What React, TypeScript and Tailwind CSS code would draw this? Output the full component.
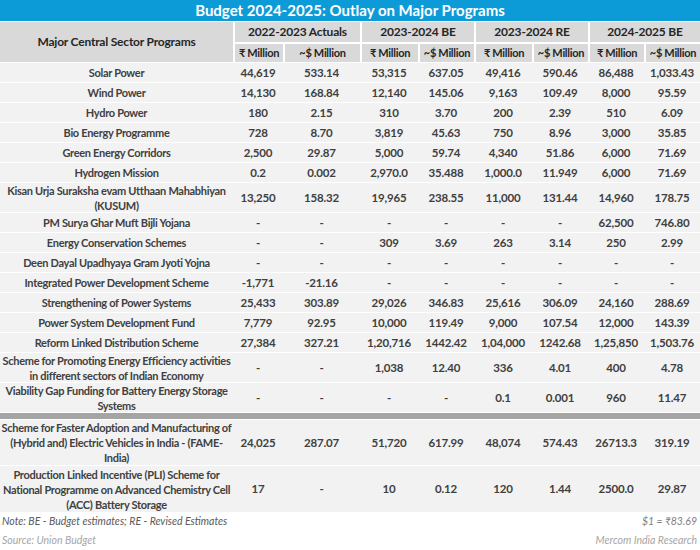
import React from "react";

type Row = { name: string[]; vals: string[]; h: string };

const rows: Row[] = [
  { name: ["Solar Power"], vals: ["44,619", "533.14", "53,315", "637.05", "49,416", "590.46", "86,488", "1,033.43"], h: "h-[20px]" },
  { name: ["Wind Power"], vals: ["14,130", "168.84", "12,140", "145.06", "9,163", "109.49", "8,000", "95.59"], h: "h-[20px]" },
  { name: ["Hydro Power"], vals: ["180", "2.15", "310", "3.70", "200", "2.39", "510", "6.09"], h: "h-[20px]" },
  { name: ["Bio Energy Programme"], vals: ["728", "8.70", "3,819", "45.63", "750", "8.96", "3,000", "35.85"], h: "h-[20px]" },
  { name: ["Green Energy Corridors"], vals: ["2,500", "29.87", "5,000", "59.74", "4,340", "51.86", "6,000", "71.69"], h: "h-[20px]" },
  { name: ["Hydrogen Mission"], vals: ["0.2", "0.002", "2,970.0", "35.488", "1,000.0", "11.949", "6,000", "71.69"], h: "h-[20px]" },
  { name: ["Kisan Urja Suraksha evam Utthaan Mahabhiyan", "(KUSUM)"], vals: ["13,250", "158.32", "19,965", "238.55", "11,000", "131.44", "14,960", "178.75"], h: "h-[30px]" },
  { name: ["PM Surya Ghar Muft Bijli Yojana"], vals: ["-", "-", "-", "-", "-", "-", "62,500", "746.80"], h: "h-[20px]" },
  { name: ["Energy Conservation Schemes"], vals: ["-", "-", "309", "3.69", "263", "3.14", "250", "2.99"], h: "h-[20px]" },
  { name: ["Deen Dayal Upadhyaya Gram Jyoti Yojna"], vals: ["-", "-", "-", "-", "-", "-", "-", "-"], h: "h-[20px]" },
  { name: ["Integrated Power Development Scheme"], vals: ["-1,771", "-21.16", "-", "-", "-", "-", "-", "-"], h: "h-[20px]" },
  { name: ["Strengthening of Power Systems"], vals: ["25,433", "303.89", "29,026", "346.83", "25,616", "306.09", "24,160", "288.69"], h: "h-[20px]" },
  { name: ["Power System Development Fund"], vals: ["7,779", "92.95", "10,000", "119.49", "9,000", "107.54", "12,000", "143.39"], h: "h-[20px]" },
  { name: ["Reform Linked Distribution Scheme"], vals: ["27,384", "327.21", "1,20,716", "1442.42", "1,04,000", "1242.68", "1,25,850", "1,503.76"], h: "h-[20px]" },
  { name: ["Scheme for Promoting Energy Efficiency activities", "in different sectors of Indian Economy"], vals: ["-", "-", "1,038", "12.40", "336", "4.01", "400", "4.78"], h: "h-[30px]" },
  { name: ["Viability Gap Funding for Battery Energy Storage", "Systems"], vals: ["-", "-", "-", "-", "0.1", "0.001", "960", "11.47"], h: "h-[30px]" },
];

const rows2: Row[] = [
  { name: ["Scheme for Faster Adoption and Manufacturing of", "(Hybrid and) Electric Vehicles in India - (FAME-", "India)"], vals: ["24,025", "287.07", "51,720", "617.99", "48,074", "574.43", "26713.3", "319.19"], h: "h-[46px]" },
  { name: ["Production Linked Incentive (PLI) Scheme for", "National Programme on Advanced Chemistry Cell", "(ACC) Battery Storage"], vals: ["17", "-", "10", "0.12", "120", "1.44", "2500.0", "29.87"], h: "h-[47px]" },
];

const grid = "grid grid-cols-[233px_50px_77px_58px_56px_58px_56px_56px_56px]";

function BodyRow({ r }: { r: Row }) {
  return (
    <div className={`${grid} ${r.h} bg-[#f2f2f2] border-b border-white items-center text-[#404040]`}>
      <div className="flex flex-col items-center justify-center text-center leading-[15px] text-[11px] tracking-[-0.3px]">
        {r.name.map((n, i) => (
          <span key={i} className="whitespace-nowrap">{n}</span>
        ))}
      </div>
      {r.vals.map((v, i) => (
        <div key={i} className="text-center whitespace-nowrap">{v}</div>
      ))}
    </div>
  );
}

export default function App() {
  return (
    <div
      className="w-[700px] h-[550px] bg-white overflow-hidden font-bold text-[11.5px] tracking-[-0.2px]"
      style={{ fontFamily: "Lato, 'Noto Sans', sans-serif" }}
    >
      <div className="h-[21px] bg-[#0d9bd8] text-white text-[15px] flex items-center justify-center leading-none tracking-normal">
        Budget 2024-2025: Outlay on Major Programs
      </div>
      <div className={`${grid} grid-rows-[21px_20px] bg-[#d9d9d9] text-[#262626] border-b border-white`}>
        <div className="row-span-2 flex items-center justify-center text-[12px] border-t border-white">
          Major Central Sector Programs
        </div>
        <div className="col-span-2 flex items-center justify-center border-l-2 border-t border-white text-[12px]">2022-2023 Actuals</div>
        <div className="col-span-2 flex items-center justify-center border-l-2 border-t border-white text-[12px]">2023-2024 BE</div>
        <div className="col-span-2 flex items-center justify-center border-l-2 border-t border-white text-[12px]">2023-2024 RE</div>
        <div className="col-span-2 flex items-center justify-center border-l-2 border-t border-white text-[12px]">2024-2025 BE</div>
        {["₹ Million", "~$ Million", "₹ Million", "~$ Million", "₹ Million", "~$ Million", "₹ Million", "~$ Million"].map((t, i) => (
          <div key={i} className="flex items-center justify-center border-l-2 border-t-2 border-white whitespace-nowrap text-[11px] tracking-[-0.3px]">
            {t}
          </div>
        ))}
      </div>
      {rows.map((r, i) => (
        <BodyRow key={i} r={r} />
      ))}
      <div className="h-[7px] bg-[#a5a5a5] border-b border-white" />
      {rows2.map((r, i) => (
        <BodyRow key={i} r={r} />
      ))}
      <div className="flex justify-between items-center h-[18px] px-[2px] italic font-normal text-[10.5px] tracking-normal">
        <span className="text-[#595959]">Note: BE - Budget estimates; RE - Revised Estimates</span>
        <span className="text-[#7f7f7f] pr-[1px]">$1 = ₹83.69</span>
      </div>
      <div className="flex justify-between items-center h-[19px] px-[2px] italic font-normal text-[10.5px] tracking-normal text-[#a6a6a6]">
        <span>Source: Union Budget</span>
        <span className="pr-[1px]">Mercom India Research</span>
      </div>
    </div>
  );
}
